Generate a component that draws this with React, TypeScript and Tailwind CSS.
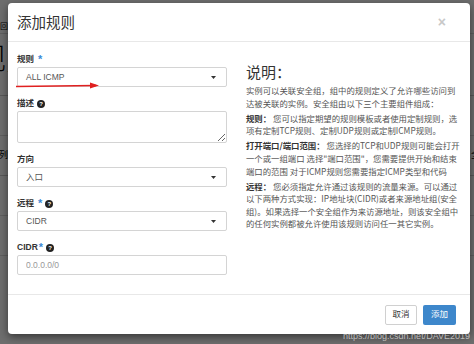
import React from 'react';

const FONT = { fontFamily: '"Liberation Sans", "Noto Sans CJK SC", sans-serif' };

const Help = () => (
  <span className="inline-flex items-center justify-center w-[8px] h-[8px] rounded-full bg-[#222] text-white text-[6px] font-bold leading-none align-middle ml-[3px]">
    ?
  </span>
);

const Star = ({ space = true }: { space?: boolean }) => (
  <span className={`inline-block h-[13px] text-[#3b8ad6] text-[11px] font-bold leading-[13px] ${space ? 'ml-[4px]' : 'ml-[1px]'}`}>*</span>
);

const Label = ({ children }: { children: React.ReactNode }) => (
  <div className="h-[13px] mb-[1px] text-[8.5px] leading-[13px] font-bold text-[#333] flex items-center">{children}</div>
);

const Select = ({ value }: { value: string }) => (
  <div className="h-[20px] border border-[#d4d4d4] rounded-[2px] flex items-center justify-between pl-[8px] pr-[10px] text-[8.5px] text-[#555]">
    <span>{value}</span>
    <svg width="5" height="3" viewBox="0 0 5 3">
      <path d="M0 0 L5 0 L2.5 3 Z" fill="#333" />
    </svg>
  </div>
);

const notes: { bold?: string; lines: string[] }[] = [
  { lines: ['实例可以关联安全组，组中的规则定义了允许哪些访问到', '达被关联的实例。安全组由以下三个主要组件组成：'] },
  { bold: '规则：', lines: [' 您可以指定期望的规则模板或者使用定制规则，选', '项有定制TCP规则、定制UDP规则或定制ICMP规则。'] },
  {
    bold: '打开端口/端口范围：',
    lines: [' 您选择的TCP和UDP规则可能会打开', '一个或一组端口 选择"端口范围"，您需要提供开始和结束', '端口的范围 对于ICMP规则您需要指定ICMP类型和代码'],
  },
  {
    bold: '远程：',
    lines: [
      ' 您必须指定允许通过该规则的流量来源。可以通过',
      '以下两种方式实现：IP地址块(CIDR)或者来源地址组(安全',
      '组)。如果选择一个安全组作为来访源地址，则该安全组中',
      '的任何实例都被允许使用该规则访问任一其它实例。',
    ],
  },
];

export default function App() {
  return (
    <div className="relative w-[474px] h-[344px] overflow-hidden bg-white" style={FONT}>
      {/* page behind the dialog */}
      <div className="flex flex-col text-black">
        <div className="h-[20px]" />
        <div className="h-[14px] text-[8px] leading-[14px] border-b border-[#ddd]">回到</div>
        <div className="h-[50px] text-[30px] leading-[50px] -ml-[24px] font-light">规则</div>
        <div className="h-[12px] border-b border-[#ccc]" />
        <div className="h-[40px] border-b border-[#ddd]" />
        <div className="h-[40px] flex items-center justify-between text-[9px] border-b border-[#ccc]">
          <span className="-ml-[10px]">组列</span>
          <span className="-mr-[6px]">全</span>
        </div>
        <div className="h-[40px] border-b border-[#ddd]" />
        <div className="h-[40px] border-b border-[#ddd]" />
      </div>
      <div className="absolute inset-0 bg-black/[0.57]" />

      {/* dialog */}
      <div className="absolute left-[8px] top-[3px] w-[462px] h-[331px] bg-white rounded-[4px] shadow-[0_3px_9px_rgba(0,0,0,0.5)] flex flex-col">
        <div className="h-[39px] shrink-0 border-b border-[#e8e8e8] flex items-center justify-between pl-[9px] pr-[24px]">
          <span className="text-[14.5px] text-[#333]" style={{ fontFamily: '"Noto Sans CJK SC", sans-serif' }}>添加规则</span>
          <span className="text-[14px] font-bold text-[#c8c8c8] leading-none">×</span>
        </div>

        <div className="flex-1 flex pl-[9px] pt-[11px] relative">
          <div className="w-[210px] flex flex-col gap-[10px]">
            <div>
              <Label>规则<Star /></Label>
              <Select value="ALL ICMP" />
            </div>
            <div>
              <Label>描述<Help /></Label>
              <textarea className="block w-full h-[32px] border border-[#d4d4d4] rounded-[2px] resize-y" />
            </div>
            <div>
              <Label>方向</Label>
              <Select value="入口" />
            </div>
            <div>
              <Label>远程<Star /><Help /></Label>
              <Select value="CIDR" />
            </div>
            <div>
              <Label>CIDR<Star space={false} /><Help /></Label>
              <input
                className="block w-full h-[20px] border border-[#d4d4d4] rounded-[2px] px-[8px] text-[8.5px] placeholder:text-[#999] outline-none"
                placeholder="0.0.0.0/0"
              />
            </div>
          </div>

          <div className="ml-[19px] w-[214px] pt-[10px] text-[#555]" style={{ fontFamily: '"Noto Sans CJK SC", sans-serif' }}>
            <div className="text-[15px] leading-[18px] text-[#333]">说明：</div>
            <div className="mt-[3px] flex flex-col gap-[2.5px]">
              {notes.map((n, i) => (
                <div key={i} className="text-[8.4px] leading-[12.6px]">
                  {n.lines.map((l, j) => (
                    <div key={j} className="whitespace-nowrap">
                      {j === 0 && n.bold && <b className="text-[#333]">{n.bold}</b>}
                      {l}
                    </div>
                  ))}
                </div>
              ))}
            </div>
          </div>

          {/* red annotation arrow */}
          <svg className="absolute left-[8px] top-[40px]" width="84" height="8" viewBox="0 0 84 8">
            <line x1="0" y1="4.5" x2="80" y2="3.5" stroke="#e02020" strokeWidth="1.5" />
            <path d="M74 0.5 L83 3.5 L74 6.5 Z" fill="#e02020" />
          </svg>
        </div>

        <div className="h-[40px] shrink-0 border-t border-[#e8e8e8] flex items-center justify-end gap-[6px] pr-[14px]">
          <button className="w-[32px] h-[20px] border border-[#d0d0d0] rounded-[2px] bg-white text-[8.5px] text-[#333]">取消</button>
          <button className="w-[33px] h-[20px] rounded-[2px] bg-[#3d87cb] text-[8.5px] text-white">添加</button>
        </div>
      </div>

      {/* watermark */}
      <div className="absolute right-[4px] top-[330px] text-[9px] text-white/60 whitespace-nowrap">https://blog.csdn.net/DAVE2019</div>
    </div>
  );
}
